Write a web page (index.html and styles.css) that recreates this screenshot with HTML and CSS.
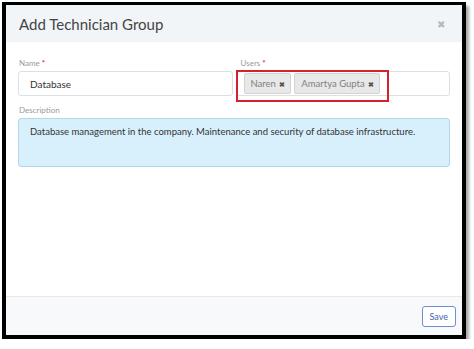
FILE: index.html
```html
<!DOCTYPE html>
<html lang="en">
<head>
    <meta charset="UTF-8">
    <meta name="viewport" content="width=device-width, initial-scale=1.0">
    <title>Add Technician Group</title>
    <link rel="stylesheet" href="styles.css">
</head>
<body>
    <div class="frame">
        <div class="modal">
            <div class="modal-header">
                <h1>Add Technician Group</h1>
                <span class="close">&#10006;</span>
            </div>
            <div class="modal-body">
                <div class="row">
                    <div class="field">
                        <label>Name <span class="req">*</span></label>
                        <div class="input">Database</div>
                    </div>
                    <div class="field users">
                        <label>Users <span class="req">*</span></label>
                        <div class="input tags">
                            <span class="tag">Naren <b>&#10006;</b></span>
                            <span class="tag">Amartya Gupta <b>&#10006;</b></span>
                        </div>
                        <div class="highlight"></div>
                    </div>
                </div>
                <div class="field">
                    <label>Description</label>
                    <div class="textarea">Database management in the company. Maintenance and security of database infrastructure.</div>
                </div>
            </div>
            <div class="modal-footer">
                <button class="save">Save</button>
            </div>
        </div>
    </div>
</body>
</html>
```

FILE: styles.css
```css
body {
    margin: 0;
    padding: 2px 0 0 2px;
    background-color: #fff;
    font-family: Lato, 'Open Sans', sans-serif;
    color: #333;
}

.frame {
    width: 456px;
    height: 330px;
    border: 4px solid #000;
    border-top-width: 3px;
    box-shadow: 3px 4px 3px rgba(0, 0, 0, 0.35);
}

.modal {
    height: 100%;
    display: flex;
    flex-direction: column;
    background-color: #fff;
}

.modal-header {
    height: 37px;
    background-color: #f2f5f8;
    display: flex;
    align-items: center;
    justify-content: space-between;
    padding: 0 17px 0 13px;
}

h1 {
    margin: 0;
    font-size: 15px;
    font-weight: normal;
    color: #444;
}

.close {
    font-size: 10px;
    color: #b8b8b8;
}

.modal-body {
    flex: 1;
    padding: 16px 12px 0 12px;
}

.row {
    display: flex;
    gap: 3px;
}

.field {
    flex: 1;
    position: relative;
}

label {
    display: block;
    font-size: 8px;
    color: #9a9a9a;
    padding-left: 1px;
    margin-bottom: 3px;
}

.users label {
    padding-left: 5px;
}

.req {
    color: #d9342b;
    font-weight: bold;
}

.input {
    height: 25px;
    box-sizing: border-box;
    border: 1px solid #dcdfe3;
    border-radius: 3px;
    font-size: 10px;
    color: #333;
    display: flex;
    align-items: center;
    padding-left: 11px;
    margin-bottom: 9px;
}

.input.tags {
    padding-left: 7px;
    gap: 3px;
}

.tag {
    background-color: #e8e8e8;
    border: 1px solid #d3d3d3;
    border-radius: 2px;
    color: #808080;
    font-size: 9.5px;
    padding: 4px 5px 4px 6px;
}

.tag b {
    font-size: 7px;
    color: #555;
    margin-left: 1px;
}

.highlight {
    position: absolute;
    left: 0;
    top: 12px;
    width: 149px;
    height: 28px;
    border: 2px solid #d3212d;
}

.textarea {
    height: 49px;
    box-sizing: border-box;
    background-color: #d8effc;
    border: 1px solid #b3d6ec;
    border-radius: 3px;
    font-size: 9.5px;
    color: #333;
    padding: 7px 11px;
}

.modal-footer {
    height: 38px;
    border-top: 1px solid #e6e8eb;
    background-color: #f8f9fb;
    display: flex;
    align-items: center;
    justify-content: flex-end;
    padding-right: 6px;
}

.save {
    font-family: Lato, sans-serif;
    font-size: 9px;
    color: #3f63b3;
    background-color: #fff;
    border: 1px solid #6f8fd0;
    border-radius: 3px;
    padding: 4px 7px;
}
```
